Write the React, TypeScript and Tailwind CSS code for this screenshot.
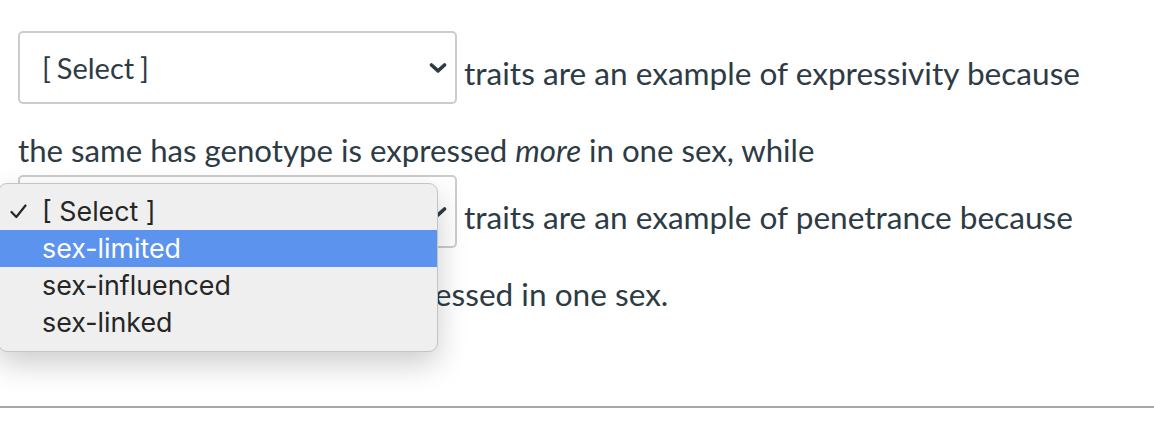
import React from 'react';

const BODY_FONT = "font-['Lato',_'Liberation_Sans',_sans-serif]";

// small bold chevron used by the closed selects
const Chevron: React.FC = () => (
  <svg width="18" height="12" viewBox="0 0 18 12" className="shrink-0">
    <path d="M2.5 3l6.5 5.8L15.5 3" fill="none" stroke="#2d3b45" strokeWidth="3.6" strokeLinecap="round" strokeLinejoin="round" />
  </svg>
);

const FakeSelect: React.FC = () => (
  <div className="flex items-center justify-between w-[439px] h-[73px] shrink-0 rounded-[5px] border-2 border-[#cccccc] bg-white pl-[22px] pr-[8px]">
    <span className="text-[29px] leading-[38px] pt-[1px] [word-spacing:-1.5px]">[ Select ]</span>
    <Chevron />
  </div>
);

const options = ['[ Select ]', 'sex-limited', 'sex-influenced', 'sex-linked'];

const App: React.FC = () => {
  const highlighted = 1;

  return (
    <div className={`relative w-[1154px] h-[424px] bg-white text-[#2d3b45] overflow-hidden ${BODY_FONT}`}>
      <div className="pt-[31px] pl-[18px]">
        {/* Row 1 */}
        <div className="flex items-start">
          <FakeSelect />
          <span className="ml-[7px] mt-[22px] text-[31.6px] leading-[40px] whitespace-nowrap">
            traits are an example of expressivity because
          </span>
        </div>
        {/* Row 2 */}
        <div className="h-[71px] pt-[26px] text-[31.2px] leading-[40px] whitespace-nowrap">
          the same has genotype is expressed <em>more</em> in one sex, while
        </div>
        {/* Row 3 */}
        <div className="flex items-start">
          <FakeSelect />
          <span className="ml-[7px] mt-[22px] text-[31.6px] leading-[40px] whitespace-nowrap">
            traits are an example of penetrance because
          </span>
        </div>
        {/* Row 4 */}
        <div className="h-[71px] pt-[26px] text-[31.6px] leading-[40px] whitespace-nowrap">
          the same genotype is not expressed in one sex.
        </div>
      </div>

      <div className="mt-[87px] h-[2px] bg-[#a6a6a6]" />

      {/* open native dropdown of the second select */}
      <div className="absolute left-[-2px] top-[183px] w-[440px] h-[169px] rounded-[9px] border border-[#c4c4c4] bg-[#efefef] shadow-[0_12px_30px_rgba(0,0,0,0.2)] pt-[9px] font-['Inter',_'Liberation_Sans',_sans-serif] text-[26.8px] text-[#262626]">
        {options.map((o, i) => (
          <div
            key={o}
            className={`flex items-center h-[37px] pl-[43px] relative ${i === highlighted ? 'bg-[#5b93ee] text-white' : ''}`}
          >
            {i === 0 && (
              <svg width="17" height="15" viewBox="0 0 17 15" className="absolute left-[11px] top-[11px]">
                <path d="M1.5 8l4.8 5L15.5 1.5" fill="none" stroke="#262626" strokeWidth="2.2" strokeLinecap="round" strokeLinejoin="round" />
              </svg>
            )}
            {o}
          </div>
        ))}
      </div>
    </div>
  );
};

export default App;
